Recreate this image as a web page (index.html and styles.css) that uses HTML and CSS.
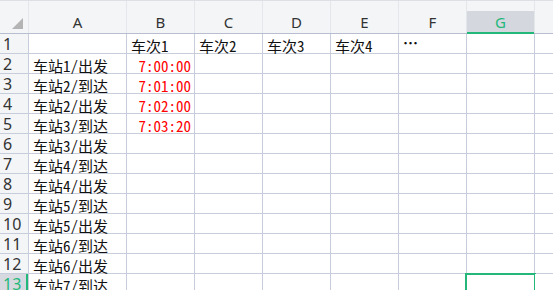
FILE: index.html
```html
<!DOCTYPE html>
<html>
<head>
	<meta charset="utf-8">
	<title>车次时刻表</title>
	<link rel="stylesheet" href="styles.css">
</head>
<body>
	<div class="sheet">
		<div class="colhead">
			<div class="corner"><span class="tri"></span></div>
			<div class="ch">A</div>
			<div class="ch">B</div>
			<div class="ch">C</div>
			<div class="ch">D</div>
			<div class="ch">E</div>
			<div class="ch">F</div>
			<div class="ch on">G</div>
			<div class="ch"></div>
		</div>
		<div class="grid">
			<div class="rh">1</div><div class="c"></div><div class="c">车次1</div><div class="c">车次2</div><div class="c">车次3</div><div class="c">车次4</div><div class="c dots">…</div><div class="c"></div><div class="c"></div>
			<div class="rh">2</div><div class="c">车站1/出发</div><div class="c t">7:00:00</div><div class="c"></div><div class="c"></div><div class="c"></div><div class="c"></div><div class="c"></div><div class="c"></div>
			<div class="rh">3</div><div class="c">车站2/到达</div><div class="c t">7:01:00</div><div class="c"></div><div class="c"></div><div class="c"></div><div class="c"></div><div class="c"></div><div class="c"></div>
			<div class="rh">4</div><div class="c">车站2/出发</div><div class="c t">7:02:00</div><div class="c"></div><div class="c"></div><div class="c"></div><div class="c"></div><div class="c"></div><div class="c"></div>
			<div class="rh">5</div><div class="c">车站3/到达</div><div class="c t">7:03:20</div><div class="c"></div><div class="c"></div><div class="c"></div><div class="c"></div><div class="c"></div><div class="c"></div>
			<div class="rh">6</div><div class="c">车站3/出发</div><div class="c"></div><div class="c"></div><div class="c"></div><div class="c"></div><div class="c"></div><div class="c"></div><div class="c"></div>
			<div class="rh">7</div><div class="c">车站4/到达</div><div class="c"></div><div class="c"></div><div class="c"></div><div class="c"></div><div class="c"></div><div class="c"></div><div class="c"></div>
			<div class="rh">8</div><div class="c">车站4/出发</div><div class="c"></div><div class="c"></div><div class="c"></div><div class="c"></div><div class="c"></div><div class="c"></div><div class="c"></div>
			<div class="rh">9</div><div class="c">车站5/到达</div><div class="c"></div><div class="c"></div><div class="c"></div><div class="c"></div><div class="c"></div><div class="c"></div><div class="c"></div>
			<div class="rh">10</div><div class="c">车站5/出发</div><div class="c"></div><div class="c"></div><div class="c"></div><div class="c"></div><div class="c"></div><div class="c"></div><div class="c"></div>
			<div class="rh">11</div><div class="c">车站6/到达</div><div class="c"></div><div class="c"></div><div class="c"></div><div class="c"></div><div class="c"></div><div class="c"></div><div class="c"></div>
			<div class="rh">12</div><div class="c">车站6/出发</div><div class="c"></div><div class="c"></div><div class="c"></div><div class="c"></div><div class="c"></div><div class="c"></div><div class="c"></div>
			<div class="rh on">13</div><div class="c">车站7/到达</div><div class="c"></div><div class="c"></div><div class="c"></div><div class="c"></div><div class="c"></div><div class="c sel"></div><div class="c"></div>
		</div>
	</div>
</body>
</html>
```
FILE: styles.css
```css
*{
	margin: 0;
	padding: 0;
	box-sizing: border-box;
}
html,body{
	height: 100%;
	overflow: hidden;
	background: #fff;
}
.sheet{
	width: 553px;
}
/* 列标题 */
.colhead{
	display: grid;
	grid-template-columns: 28px 97px repeat(6, 67px) 1fr;
	column-gap: 1px;
	height: 34px;
	background: #e3e6eb;
	border-top: 1px solid #dcdfe4;
	border-bottom: 1px solid #b6bed0;
}
.corner,.ch{
	background: #f4f5f7;
}
.corner{
	position: relative;
}
.tri{
	position: absolute;
	left: 12px;
	top: 17px;
	width: 11px;
	height: 11px;
	background: #b4b4b4;
	clip-path: polygon(100% 0, 100% 100%, 0 100%);
}
.ch{
	display: flex;
	align-items: center;
	justify-content: center;
	padding-top: 10px;
	font-family: "Noto Sans", sans-serif;
	font-size: 15px;
	color: #333;
}
.ch.on{
	background: linear-gradient(#f4f5f7 10px, #d4d7dd 10px);
	color: #23b77a;
	box-shadow: 0 1px 0 #23b77a, inset 0 -1px 0 #23b77a;
}
/* 表格 */
.grid{
	display: grid;
	grid-template-columns: 28px 97px repeat(6, 67px) 1fr;
	grid-auto-rows: 19px;
	gap: 1px;
	background: #c7cddb;
}
.rh{
	display: flex;
	align-items: center;
	padding: 1px 0 0 3px;
	background: #f4f5f7;
	font-family: "Noto Sans", sans-serif;
	font-size: 16px;
	color: #333;
}
.rh.on{
	background: #d6d9df;
	color: #23b77a;
	box-shadow: inset -2px 0 0 #23b77a;
}
.c{
	position: relative;
	display: flex;
	align-items: flex-end;
	padding: 0 3px 0 4px;
	background: #fff;
	font-family: "Noto Sans CJK SC", sans-serif;
	font-feature-settings: "hwid";
	font-size: 15px;
	line-height: 15px;
	color: #111;
	white-space: nowrap;
}
.c.t{
	justify-content: flex-end;
	color: #f00;
}
.c.dots{
	font-weight: bold;
	padding-bottom: 3px;
}
.c.sel::after{
	content: "";
	position: absolute;
	left: -2px;
	right: -2px;
	top: -1px;
	height: 30px;
	border: 2px solid #23b77a;
}
```
